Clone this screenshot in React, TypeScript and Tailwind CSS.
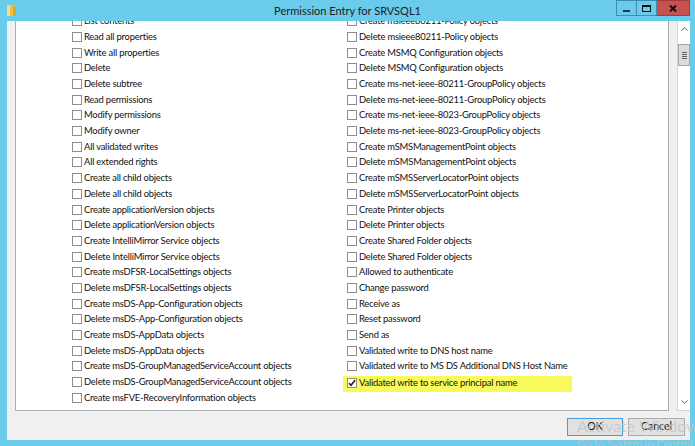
const leftItems = [
  "List contents",
  "Read all properties",
  "Write all properties",
  "Delete",
  "Delete subtree",
  "Read permissions",
  "Modify permissions",
  "Modify owner",
  "All validated writes",
  "All extended rights",
  "Create all child objects",
  "Delete all child objects",
  "Create applicationVersion objects",
  "Delete applicationVersion objects",
  "Create IntelliMirror Service objects",
  "Delete IntelliMirror Service objects",
  "Create msDFSR-LocalSettings objects",
  "Delete msDFSR-LocalSettings objects",
  "Create msDS-App-Configuration objects",
  "Delete msDS-App-Configuration objects",
  "Create msDS-AppData objects",
  "Delete msDS-AppData objects",
  "Create msDS-GroupManagedServiceAccount objects",
  "Delete msDS-GroupManagedServiceAccount objects",
  "Create msFVE-RecoveryInformation objects",
];

const rightItems = [
  "Create msieee80211-Policy objects",
  "Delete msieee80211-Policy objects",
  "Create MSMQ Configuration objects",
  "Delete MSMQ Configuration objects",
  "Create ms-net-ieee-80211-GroupPolicy objects",
  "Delete ms-net-ieee-80211-GroupPolicy objects",
  "Create ms-net-ieee-8023-GroupPolicy objects",
  "Delete ms-net-ieee-8023-GroupPolicy objects",
  "Create mSMSManagementPoint objects",
  "Delete mSMSManagementPoint objects",
  "Create mSMSServerLocatorPoint objects",
  "Delete mSMSServerLocatorPoint objects",
  "Create Printer objects",
  "Delete Printer objects",
  "Create Shared Folder objects",
  "Delete Shared Folder objects",
  "Allowed to authenticate",
  "Change password",
  "Receive as",
  "Reset password",
  "Send as",
  "Validated write to DNS host name",
  "Validated write to MS DS Additional DNS Host Name",
  "Validated write to service principal name",
];

function Box({ checked }: { checked?: boolean }) {
  return (
    <span className="w-[10px] h-[10px] border border-[#8e8e8e] bg-white flex items-center justify-center shrink-0">
      {checked && (
        <svg width="8" height="8" viewBox="0 0 8 8">
          <path d="M1 4.2 L3 6.3 L7 1.2" fill="none" stroke="#1c1c1c" strokeWidth="1.6" />
        </svg>
      )}
    </span>
  );
}

function Row({ label, checked }: { label: string; checked?: boolean }) {
  if (checked) {
    return (
      <div className="h-[15.7px] flex items-center">
        <div className="mt-[4px] -ml-[4px] pl-[4px] w-[229px] h-[16px] pb-[3px] bg-[#f9fa5c] flex items-center gap-[2px]">
          <Box checked />
          <span>{label}</span>
        </div>
      </div>
    );
  }
  return (
    <div className="h-[15.7px] flex items-center gap-[2px]">
      <Box />
      <span>{label}</span>
    </div>
  );
}

export default function App() {
  return (
    <div className="w-[695px] h-[446px] bg-[#6bcbea] flex flex-col overflow-hidden relative font-['Lato',sans-serif] text-[#111]">
      {/* title bar */}
      <div className="h-[21px] grid grid-cols-[1fr_auto_1fr] items-start shrink-0">
        <div className="pl-[7px] pt-[5px]">
          <svg width="9" height="11" viewBox="0 0 9 11">
            <rect x="0" y="0" width="9" height="11" fill="#e8c04a" />
            <rect x="0" y="0" width="3" height="11" fill="#f6dc7c" />
            <rect x="6" y="1" width="3" height="10" fill="#d6a92e" />
          </svg>
        </div>
        <div className="pt-[4px] text-[11px] leading-[14px] text-[#1e1e1e]">Permission Entry for SRVSQL1</div>
        <div className="flex justify-end pr-[5px]">
          <div className="w-[21px] h-[16px] border border-[#3b8db3] flex items-center justify-center">
            <span className="w-[7px] h-[2px] bg-[#1a3a4a] mt-[5px]" />
          </div>
          <div className="w-[20px] h-[16px] border border-l-0 border-[#3b8db3] flex items-center justify-center">
            <span className="w-[9px] h-[7px] border border-t-[2px] border-[#111]" />
          </div>
          <div className="w-[33px] h-[16px] bg-[#c75050] border border-l-0 border-[#a33c3c] flex items-center justify-center">
            <svg width="8" height="7" viewBox="0 0 8 7">
              <path d="M1 0.5 L7 6.5 M7 0.5 L1 6.5" stroke="#111" strokeWidth="2" />
            </svg>
          </div>
        </div>
      </div>

      {/* body */}
      <div className="flex-1 flex px-[7px] pr-[5px] pb-[6px]">
        <div className="flex-1 bg-[#f0f0f0] flex flex-col">
          <div className="h-[390px] flex">
            <div className="w-[8px]" />
            <div className="w-[654px] bg-white border-x border-b border-[#adadad] overflow-hidden">
              <div className="mt-[-7.6px] pl-[56px] flex text-[9.4px] tracking-[-0.2px] leading-[12px] whitespace-nowrap">
                <div className="w-[275px] flex flex-col">
                  {leftItems.map((t) => (
                    <Row key={t} label={t} />
                  ))}
                </div>
                <div className="flex-1 flex flex-col">
                  {rightItems.map((t, i) => (
                    <Row key={t} label={t} checked={i === rightItems.length - 1} />
                  ))}
                </div>
              </div>
            </div>
            <div className="w-[8px]" />
            {/* scrollbar */}
            <div className="w-[13px] bg-white border-l border-b border-[#d4d4d4] flex flex-col">
              <div className="h-[16px] flex items-center justify-center">
                <svg width="7" height="4" viewBox="0 0 7 4">
                  <path d="M0.5 3.5 L3.5 0.8 L6.5 3.5" fill="none" stroke="#606060" strokeWidth="1" />
                </svg>
              </div>
              <div className="h-[7px]" />
              <div className="h-[22px] bg-[#dcdcdc] border border-[#a8a8a8] flex flex-col items-center justify-center gap-[1px]">
                <span className="w-[5px] h-[1px] bg-[#606060]" />
                <span className="w-[5px] h-[1px] bg-[#606060]" />
                <span className="w-[5px] h-[1px] bg-[#606060]" />
                <span className="w-[5px] h-[1px] bg-[#606060]" />
              </div>
              <div className="flex-1" />
              <div className="h-[16px] flex items-center justify-center">
                <svg width="7" height="4" viewBox="0 0 7 4">
                  <path d="M0.5 0.5 L3.5 3.2 L6.5 0.5" fill="none" stroke="#606060" strokeWidth="1" />
                </svg>
              </div>
            </div>
          </div>

          {/* button bar */}
          <div className="flex-1 flex justify-end items-start pt-[7px] pr-[5px] gap-[5px] text-[10.5px]">
            <button className="w-[56px] h-[18px] bg-[#e1e1e1] border border-[#4a9ce0] flex items-center justify-center">OK</button>
            <button className="w-[57px] h-[18px] bg-[#e1e1e1] border border-[#adadad] flex items-center justify-center">Cancel</button>
          </div>
        </div>
      </div>

      {/* activation watermark */}
      <div className="absolute left-[577px] top-[415px] pointer-events-none text-[#c4c4c4]/80 whitespace-nowrap">
        <div className="text-[16px] leading-[22px]">Activate Windows</div>
        <div className="text-[11px] leading-[14px]">Go to System in Control Panel to activate Windows.</div>
      </div>
    </div>
  );
}
